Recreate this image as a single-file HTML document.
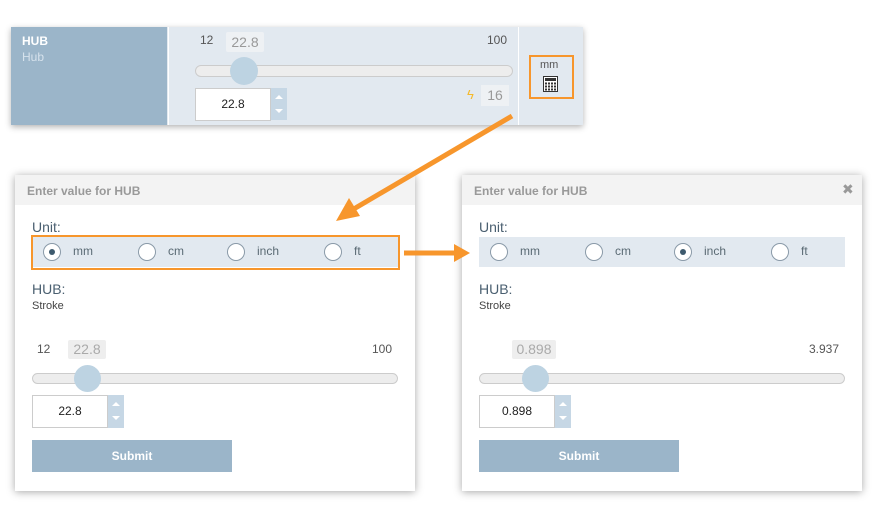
<!DOCTYPE html>
<html><head><meta charset="utf-8"><style>
*{margin:0;padding:0;box-sizing:border-box}
body{width:883px;height:512px;background:#fff;position:relative;overflow:hidden;font-family:"Liberation Sans","DejaVu Sans",sans-serif}
.a{position:absolute}
.dlg{position:absolute;top:175px;width:400px;height:316px;background:#fff;box-shadow:0 1px 8px rgba(0,0,0,.35)}
.hdr{position:absolute;left:0;top:0;width:400px;height:30px;background:#f3f3f3;font-weight:bold;font-size:12px;color:#999;padding:9px 12px}
.row{position:absolute;left:17px;top:62px;width:366px;height:30px;background:#e2e9f0}
.rad{position:absolute;width:18px;height:18px;border-radius:50%;border:1px solid #8a9aa8;background:#fff;top:6px}
.rad.on::after{content:"";position:absolute;left:5px;top:5px;width:6px;height:6px;border-radius:50%;background:#3d5a6e}
.rl{position:absolute;top:7px;font-size:12px;color:#5a6a74}
.track{position:absolute;left:17px;top:198px;width:366px;height:11px;border-radius:6px;background:#ededed;border:1px solid #ccc}
.thumb{position:absolute;width:27px;height:27px;border-radius:50%;background:#bdd3e2}
.vbox{position:absolute;top:165px;height:19px;background:#eee;border-radius:2px;color:#aaa;font-size:14px;text-align:center;line-height:19px}
.inp{position:absolute;left:17px;top:220px;width:76px;height:33px;border:1px solid #ccc;background:#fff;font-size:12px;text-align:center;line-height:31px;color:#222}
.spin{position:absolute;left:93px;top:220px;width:16px;height:33px;background:#c6d7e5}
.spin::before{content:"";position:absolute;left:4px;top:7px;border:4px solid transparent;border-bottom:4px solid #fff;border-top:0}
.spin::after{content:"";position:absolute;left:4px;top:21px;border:4px solid transparent;border-top:4px solid #fff;border-bottom:0}
.sub{position:absolute;left:17px;top:265px;width:200px;height:32px;background:#9bb5c9;color:#fff;font-weight:bold;font-size:12px;text-align:center;line-height:32px}
.t{position:absolute;font-size:14px;color:#4a5f70}
</style></head><body>

<!-- top panel -->
<div class="a" style="left:11px;top:27px;width:572px;height:98px;background:#e2e9f0;box-shadow:0 2px 6px rgba(0,0,0,.3)"></div>
<div class="a" style="left:11px;top:27px;width:156px;height:98px;background:#9bb5c9"></div>
<div class="a" style="left:22px;top:34px;font-size:12px;font-weight:bold;color:#fff">HUB</div>
<div class="a" style="left:22px;top:50px;font-size:12px;color:#d6e2ec">Hub</div>
<div class="a" style="left:168px;top:27px;width:1px;height:98px;background:#fff"></div>
<div class="a" style="left:518px;top:27px;width:1px;height:98px;background:#fff"></div>
<div class="a" style="left:200px;top:33px;font-size:12px;color:#555">12</div>
<div class="a" style="left:226px;top:32px;width:38px;height:20px;background:#eef1f4;border-radius:2px;color:#999;font-size:14px;text-align:center;line-height:20px">22.8</div>
<div class="a" style="left:487px;top:33px;font-size:12px;color:#555">100</div>
<div class="a" style="left:195px;top:65px;width:318px;height:12px;border-radius:6px;background:#ededed;border:1px solid #ccc"></div>
<div class="a" style="left:230px;top:57px;width:28px;height:28px;border-radius:50%;background:#bdd3e2"></div>
<div class="a" style="left:195px;top:88px;width:76px;height:33px;border:1px solid #ccc;background:#fff;font-size:12px;text-align:center;line-height:31px;color:#222">22.8</div>
<div class="a spin" style="left:271px;top:88px;height:32px"></div>
<div class="a" style="left:467px;top:87px;font-size:13px;color:#f5b92a">ϟ</div>
<div class="a" style="left:481px;top:85px;width:28px;height:21px;background:#eef1f4;color:#999;font-size:14px;text-align:center;line-height:21px">16</div>
<div class="a" style="left:529px;top:55px;width:45px;height:44px;border:2px solid #f7962c"></div>
<div class="a" style="left:540px;top:59px;font-size:11px;color:#555">mm</div>
<svg class="a" style="left:543px;top:76px" width="15" height="16" viewBox="0 0 15 16"><rect x="0.5" y="0.5" width="14" height="15" fill="#fff" stroke="#333"/><rect x="2" y="2" width="11" height="3" fill="#333"/><g fill="#333"><rect x="2" y="6.5" width="2" height="2"/><rect x="5" y="6.5" width="2" height="2"/><rect x="8" y="6.5" width="2" height="2"/><rect x="11" y="6.5" width="2" height="2"/><rect x="2" y="9.5" width="2" height="2"/><rect x="5" y="9.5" width="2" height="2"/><rect x="8" y="9.5" width="2" height="2"/><rect x="11" y="9.5" width="2" height="2"/><rect x="2" y="12.5" width="2" height="2"/><rect x="5" y="12.5" width="2" height="2"/><rect x="8" y="12.5" width="2" height="2"/><rect x="11" y="12.5" width="2" height="2"/></g></svg>

<!-- dialog 1 -->
<div class="dlg" style="left:15px">
<div class="hdr">Enter value for HUB</div>
<div class="t" style="left:17px;top:44px">Unit:</div>
<div class="row">
<div class="rad on" style="left:11px"></div><div class="rl" style="left:41px">mm</div>
<div class="rad" style="left:106px"></div><div class="rl" style="left:136px">cm</div>
<div class="rad" style="left:195px"></div><div class="rl" style="left:225px">inch</div>
<div class="rad" style="left:292px"></div><div class="rl" style="left:322px">ft</div>
</div>
<div class="t" style="left:17px;top:106px">HUB:</div>
<div class="a" style="left:17px;top:125px;font-size:11px;color:#444">Stroke</div>
<div class="a" style="left:22px;top:167px;font-size:12px;color:#555">12</div>
<div class="vbox" style="left:53px;width:38px">22.8</div>
<div class="a" style="left:357px;top:167px;font-size:12px;color:#555">100</div>
<div class="track"></div>
<div class="thumb" style="left:59px;top:190px"></div>
<div class="inp">22.8</div><div class="spin"></div>
<div class="sub">Submit</div>
</div>

<!-- dialog 2 -->
<div class="dlg" style="left:462px">
<div class="hdr">Enter value for HUB</div>
<div class="a" style="left:380px;top:6px;font-size:14px;font-weight:bold;color:#999">✖</div>
<div class="t" style="left:17px;top:44px">Unit:</div>
<div class="row">
<div class="rad" style="left:11px"></div><div class="rl" style="left:41px">mm</div>
<div class="rad" style="left:106px"></div><div class="rl" style="left:136px">cm</div>
<div class="rad on" style="left:195px"></div><div class="rl" style="left:225px">inch</div>
<div class="rad" style="left:292px"></div><div class="rl" style="left:322px">ft</div>
</div>
<div class="t" style="left:17px;top:106px">HUB:</div>
<div class="a" style="left:17px;top:125px;font-size:11px;color:#444">Stroke</div>
<div class="vbox" style="left:50px;width:44px">0.898</div>
<div class="a" style="left:347px;top:167px;font-size:12px;color:#555">3.937</div>
<div class="track"></div>
<div class="thumb" style="left:60px;top:190px"></div>
<div class="inp">0.898</div><div class="spin"></div>
<div class="sub">Submit</div>
</div>

<!-- orange highlight on dialog 1 radio row -->
<div class="a" style="left:31px;top:235px;width:369px;height:35px;border:2px solid #f7962c"></div>

<!-- arrows -->
<svg class="a" style="left:0;top:0" width="883" height="512">
<line x1="512" y1="116" x2="352" y2="210" stroke="#f7962c" stroke-width="5"/>
<polygon points="336,221 349,198 360,216" fill="#f7962c"/>
<line x1="404" y1="253" x2="456" y2="253" stroke="#f7962c" stroke-width="5"/>
<polygon points="470,253 454,244 454,262" fill="#f7962c"/>
</svg>
</body></html>
